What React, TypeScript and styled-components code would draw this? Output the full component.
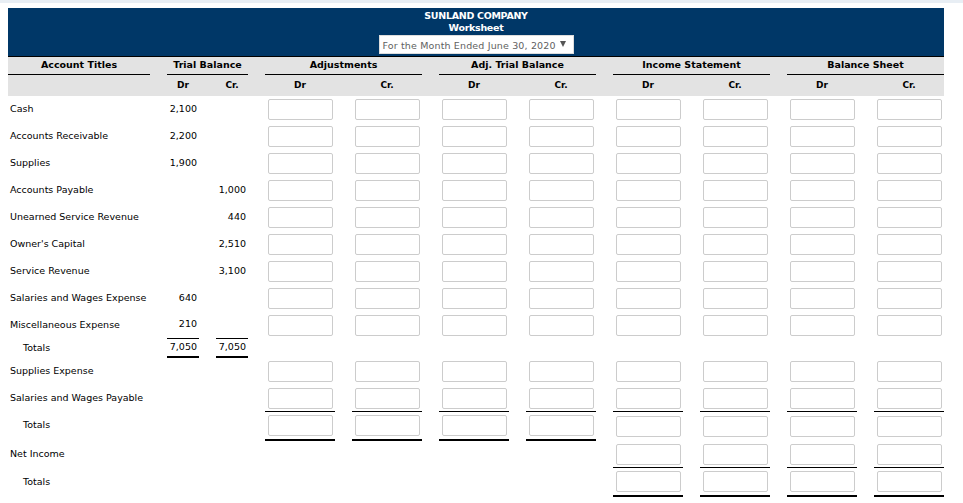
import React from 'react';
import styled, { createGlobalStyle } from 'styled-components';

const Global = createGlobalStyle`
  html, body { margin: 0; padding: 0; background: #fff; }
  body { font-family: "DejaVu Sans", Verdana, sans-serif; font-size: 9px; color: #000; }
`;
const TopStrip = styled.div`height: 3px; background: #e8eef4;`;
const Page = styled.div`width: 936px; padding: 5px 0 0 8px;`;
const Banner = styled.header`
  height: 48px; background: #003767; color: #fff; text-align: center;
  display: flex; flex-direction: column; align-items: center;
  font-weight: 700; font-size: 9.5px; line-height: 12px; padding-top: 2px; box-sizing: border-box;
`;
const Title = styled.div`height: 12px; letter-spacing: -0.3px;`;
const Period = styled.div`
  margin-top: 1px; width: 195px; height: 19px; box-sizing: border-box; background: #fff;
  color: #5f5f5f; font-weight: 400; font-size: 9.5px; text-align: left; padding: 0 3px; line-height: 19px;
  display: flex; justify-content: space-between; border: 1px solid #ddd; letter-spacing: 0.15px;
`;
const Arrow = styled.svg`width: 6px; height: 6px; margin: 5px 4px 0 0;`;
const Grid = styled.div<{ $h: number; $head?: boolean; $line?: boolean }>`
  display: grid; grid-template-columns: 142px 32px 32px repeat(8, 70px); column-gap: 17px;
  height: ${p => p.$h}px; box-sizing: border-box;
  ${p => p.$head && 'background: #e3e3e3;'}
  ${p => p.$line && 'border-top: 1px solid #000;'}
`;
const GroupTitle = styled.div<{ $span: number }>`
  grid-column: span ${p => p.$span}; border-bottom: 1px solid #000; text-align: center;
  font-weight: 700; font-size: 9.5px; line-height: 16px; height: 18px; box-sizing: border-box;
`;
const ColHead = styled.div`text-align: center; font-weight: 700; font-size: 9px; line-height: 21px;`;
const Label = styled.div<{ $indent?: boolean; $lh?: number }>`
  font-size: 9.5px; line-height: ${p => p.$lh ?? 25}px; padding-left: ${p => (p.$indent ? 15 : 2)}px; white-space: nowrap;
`;
const Amount = styled.div<{ $rule?: number; $lh?: number }>`
  font-size: 9.5px; text-align: right; padding-right: 2px; line-height: ${p => p.$lh ?? 25}px; box-sizing: border-box;
  ${p => (p.$rule ? `border-bottom: ${p.$rule}px solid #000;` : '')}
`;
const Cell = styled.div<{ $rule?: number; $top?: number }>`
  box-sizing: border-box; padding: ${p => p.$top ?? 3}px 2px 0 3px;
  ${p => (p.$rule ? `border-bottom: ${p.$rule}px solid #000;` : '')}
`;
const Field = styled.input`
  display: block; width: 65px; height: 21px; box-sizing: border-box; padding: 0;
  border: 1px solid #ccc; border-radius: 2px; background: #fff; outline: none;
`;

type RowDef = { name: string; dr?: string; cr?: string };
const first: RowDef[] = [
  { name: 'Cash', dr: '2,100' },
  { name: 'Accounts Receivable', dr: '2,200' },
  { name: 'Supplies', dr: '1,900' },
  { name: 'Accounts Payable', cr: '1,000' },
  { name: 'Unearned Service Revenue', cr: '440' },
  { name: "Owner's Capital", cr: '2,510' },
  { name: 'Service Revenue', cr: '3,100' },
  { name: 'Salaries and Wages Expense', dr: '640' },
  { name: 'Miscellaneous Expense', dr: '210' },
];
const Fields = ({ from = 0, rule }: { from?: number; rule?: number }) => (
  <>
    {Array.from({ length: 8 }, (_, i) =>
      i >= from ? <Cell key={i} $rule={rule}><Field /></Cell> : <div key={i} />
    )}
  </>
);
const MixedTotals = () => (
  <>
    {Array.from({ length: 8 }, (_, i) =>
      i < 4
        ? <Cell key={i} $rule={2}><Field /></Cell>
        : <Cell key={i} $top={4}><Field /></Cell>
    )}
  </>
);

export default function App() {
  return (
    <>
      <Global />
      <TopStrip />
      <Page>
        <Banner>
          <Title>SUNLAND COMPANY</Title>
          <Title>Worksheet</Title>
          <Period>
            For the Month Ended June 30, 2020
            <Arrow viewBox="0 0 6 6"><path d="M0 0h6L3 6z" fill="#555" /></Arrow>
          </Period>
        </Banner>
        <Grid $h={19} $head $line>
          <GroupTitle $span={1}>Account Titles</GroupTitle>
          <GroupTitle $span={2}>Trial Balance</GroupTitle>
          <GroupTitle $span={2}>Adjustments</GroupTitle>
          <GroupTitle $span={2}>Adj. Trial Balance</GroupTitle>
          <GroupTitle $span={2}>Income Statement</GroupTitle>
          <GroupTitle $span={2}>Balance Sheet</GroupTitle>
        </Grid>
        <Grid $h={21} $head>
          <div />
          {['Dr', 'Cr.', 'Dr', 'Cr.', 'Dr', 'Cr.', 'Dr', 'Cr.', 'Dr', 'Cr.'].map((t, i) => <ColHead key={i}>{t}</ColHead>)}
        </Grid>
        {first.map((r, i) => (
          <Grid $h={27} key={r.name}>
            <Label>{r.name}</Label>
            <Amount $rule={i === 8 ? 1 : 0} $lh={i === 8 ? 23 : 25}>{r.dr}</Amount>
            <Amount $rule={i === 8 ? 1 : 0}>{r.cr}</Amount>
            <Fields />
          </Grid>
        ))}
        <Grid $h={19}>
          <Label $indent $lh={18}>Totals</Label>
          <Amount $rule={2} $lh={16}>7,050</Amount>
          <Amount $rule={2} $lh={16}>7,050</Amount>
          <Fields from={8} />
        </Grid>
        <Grid $h={27}>
          <Label>Supplies Expense</Label><div /><div />
          <Fields />
        </Grid>
        <Grid $h={27}>
          <Label>Salaries and Wages Payable</Label><div /><div />
          <Fields rule={1} />
        </Grid>
        <Grid $h={29}>
          <Label $indent $lh={26}>Totals</Label><div /><div />
          <MixedTotals />
        </Grid>
        <Grid $h={27}>
          <Label>Net Income</Label><div /><div />
          <Fields from={4} rule={1} />
        </Grid>
        <Grid $h={29}>
          <Label $indent $lh={27}>Totals</Label><div /><div />
          <Fields from={4} rule={2} />
        </Grid>
      </Page>
    </>
  );
}
